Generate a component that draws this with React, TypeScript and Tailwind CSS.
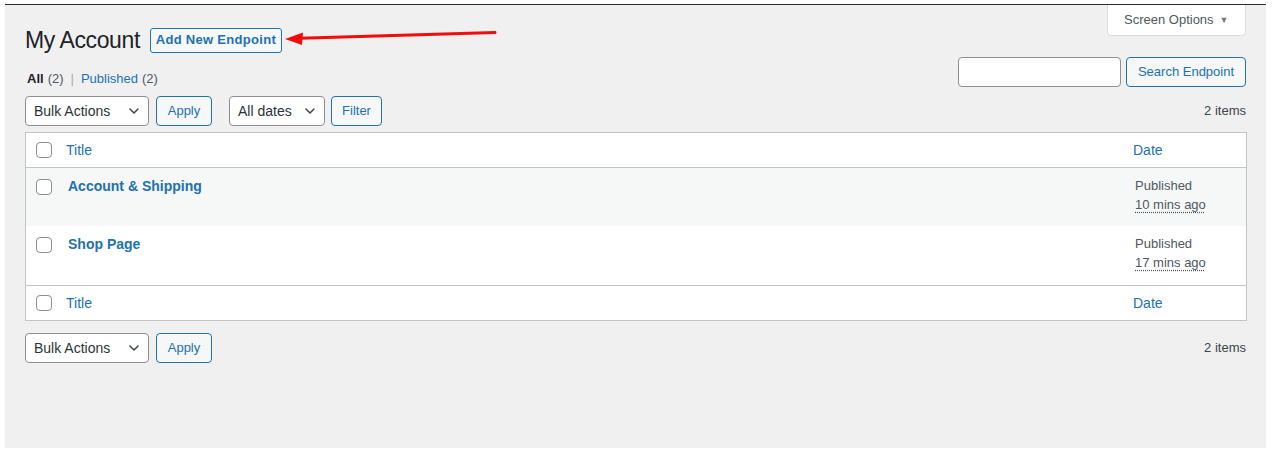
import React from "react";

function Chevron() {
  return (
    <svg width="10" height="6" viewBox="0 0 10 6" fill="none">
      <path d="M1 1l4 4 4-4" stroke="#3c434a" strokeWidth="1.5" strokeLinecap="round" strokeLinejoin="round" />
    </svg>
  );
}

function Select({ label, w }: { label: string; w: string }) {
  return (
    <div className={`${w} h-[30px] flex items-center justify-between pl-[8px] pr-[9px] bg-white border border-[#8c8f94] rounded-[4px] text-[14px] text-[#2c3338]`}>
      <span>{label}</span>
      <Chevron />
    </div>
  );
}

function Btn({ label, w }: { label: string; w: string }) {
  return (
    <div className={`${w} h-[30px] flex items-center justify-center bg-[#f6f7f7] border border-[#2271b1] rounded-[4px] text-[13px] text-[#2271b1]`}>
      {label}
    </div>
  );
}

function Checkbox() {
  return <div className="w-[16px] h-[16px] bg-white border border-[#8c8f94] rounded-[4px] shrink-0" />;
}

export default function App() {
  return (
    <div className="relative w-[1273px] h-[460px] bg-white font-['Liberation_Sans',Arial,sans-serif] text-[#1d2327]">
      <div className="ml-[5px] pt-[4px]">
        <div className="w-[1261px] h-[444px] bg-[#f0f0f1] border-t border-[#2c2c2c] px-[20px]">
          {/* header row */}
          <div className="flex justify-between items-start">
            <div className="flex items-center mt-[20px] h-[30px]">
              <h1 className="text-[23px] leading-[30px] tracking-[-0.4px] font-normal text-[#1d2327]">My Account</h1>
              <div className="ml-[10px] h-[25px] w-[132px] flex items-center justify-center bg-[#f6f7f7] border border-[#2271b1] rounded-[3px] text-[13px] font-semibold tracking-[0.3px] text-[#2271b1]">
                Add New Endpoint
              </div>
            </div>
            <div className="h-[31px] w-[139px] flex items-center pl-[16px] gap-[6px] bg-white border border-t-0 border-[#dcdcde] rounded-b-[4px] text-[13px] text-[#50575e]">
              <span>Screen Options</span>
              <span className="text-[9px] leading-none text-[#787c82]">▼</span>
            </div>
          </div>

          {/* filters + search */}
          <div className="flex justify-between items-start mt-[2px] h-[32px]">
            <div className="pt-[12px] pl-[2px] text-[13px] leading-[20px] text-[#50575e] flex items-center">
              <span className="font-semibold text-[#1d2327]">All</span>
              <span className="ml-[4px]">(2)</span>
              <span className="mx-[7px] text-[#a7aaad]">|</span>
              <span className="text-[#2271b1]">Published</span>
              <span className="ml-[4px]">(2)</span>
            </div>
            <div className="flex items-center gap-[5px]">
              <div className="w-[163px] h-[30px] bg-white border border-[#8c8f94] rounded-[4px]" />
              <div className="w-[120px] h-[30px] flex items-center justify-center bg-[#f6f7f7] border border-[#2271b1] rounded-[4px] text-[13px] text-[#2271b1]">
                Search Endpoint
              </div>
            </div>
          </div>

          {/* top tablenav */}
          <div className="flex items-center justify-between mt-[7px] h-[30px]">
            <div className="flex items-center">
              <Select label="Bulk Actions" w="w-[124px]" />
              <div className="ml-[7px]">
                <Btn label="Apply" w="w-[56px]" />
              </div>
              <div className="ml-[17px]">
                <Select label="All dates" w="w-[96px]" />
              </div>
              <div className="ml-[6px]">
                <Btn label="Filter" w="w-[51px]" />
              </div>
            </div>
            <div className="text-[13px] text-[#3c434a]">2 items</div>
          </div>

          {/* table */}
          <div className="mt-[6px] w-[1222px] bg-white border border-[#c3c4c7]">
            <div className="h-[35px] flex items-center border-b border-[#c3c4c7]">
              <div className="w-[40px] pl-[10px]"><Checkbox /></div>
              <div className="flex-1 text-[14px] text-[#2271b1]">Title</div>
              <div className="w-[113px] text-[14px] text-[#2271b1]">Date</div>
            </div>

            <div className="h-[58px] flex items-start bg-[#f6f7f7]">
              <div className="w-[40px] pl-[10px] pt-[11px]"><Checkbox /></div>
              <div className="flex-1 pl-[2px] pt-[8px] text-[14px] leading-[20px] font-semibold text-[#2271b1]">Account &amp; Shipping</div>
              <div className="w-[113px] pl-[2px] pt-[8px] text-[13px] leading-[19px] text-[#50575e]">
                <div>Published</div>
                <div><span className="underline decoration-dotted underline-offset-[3px]">10 mins ago</span></div>
              </div>
            </div>

            <div className="h-[59px] flex items-start bg-white">
              <div className="w-[40px] pl-[10px] pt-[11px]"><Checkbox /></div>
              <div className="flex-1 pl-[2px] pt-[8px] text-[14px] leading-[20px] font-semibold text-[#2271b1]">Shop Page</div>
              <div className="w-[113px] pl-[2px] pt-[8px] text-[13px] leading-[19px] text-[#50575e]">
                <div>Published</div>
                <div><span className="underline decoration-dotted underline-offset-[3px]">17 mins ago</span></div>
              </div>
            </div>

            <div className="h-[35px] flex items-center border-t border-[#c3c4c7]">
              <div className="w-[40px] pl-[10px]"><Checkbox /></div>
              <div className="flex-1 text-[14px] text-[#2271b1]">Title</div>
              <div className="w-[113px] text-[14px] text-[#2271b1]">Date</div>
            </div>
          </div>

          {/* bottom tablenav */}
          <div className="flex items-center justify-between mt-[12px] h-[30px]">
            <div className="flex items-center">
              <Select label="Bulk Actions" w="w-[124px]" />
              <div className="ml-[7px]">
                <Btn label="Apply" w="w-[56px]" />
              </div>
            </div>
            <div className="text-[13px] text-[#3c434a]">2 items</div>
          </div>
        </div>
      </div>

      {/* red annotation arrow */}
      <svg className="absolute left-[280px] top-[25px]" width="222" height="25" viewBox="0 0 222 25" fill="none">
        <path d="M20 13.2 L215 7.5" stroke="#f20d0d" strokeWidth="3" strokeLinecap="round" />
        <path d="M5 14 L23 7.5 L22 20 Z" fill="#f20d0d" />
      </svg>
    </div>
  );
}
